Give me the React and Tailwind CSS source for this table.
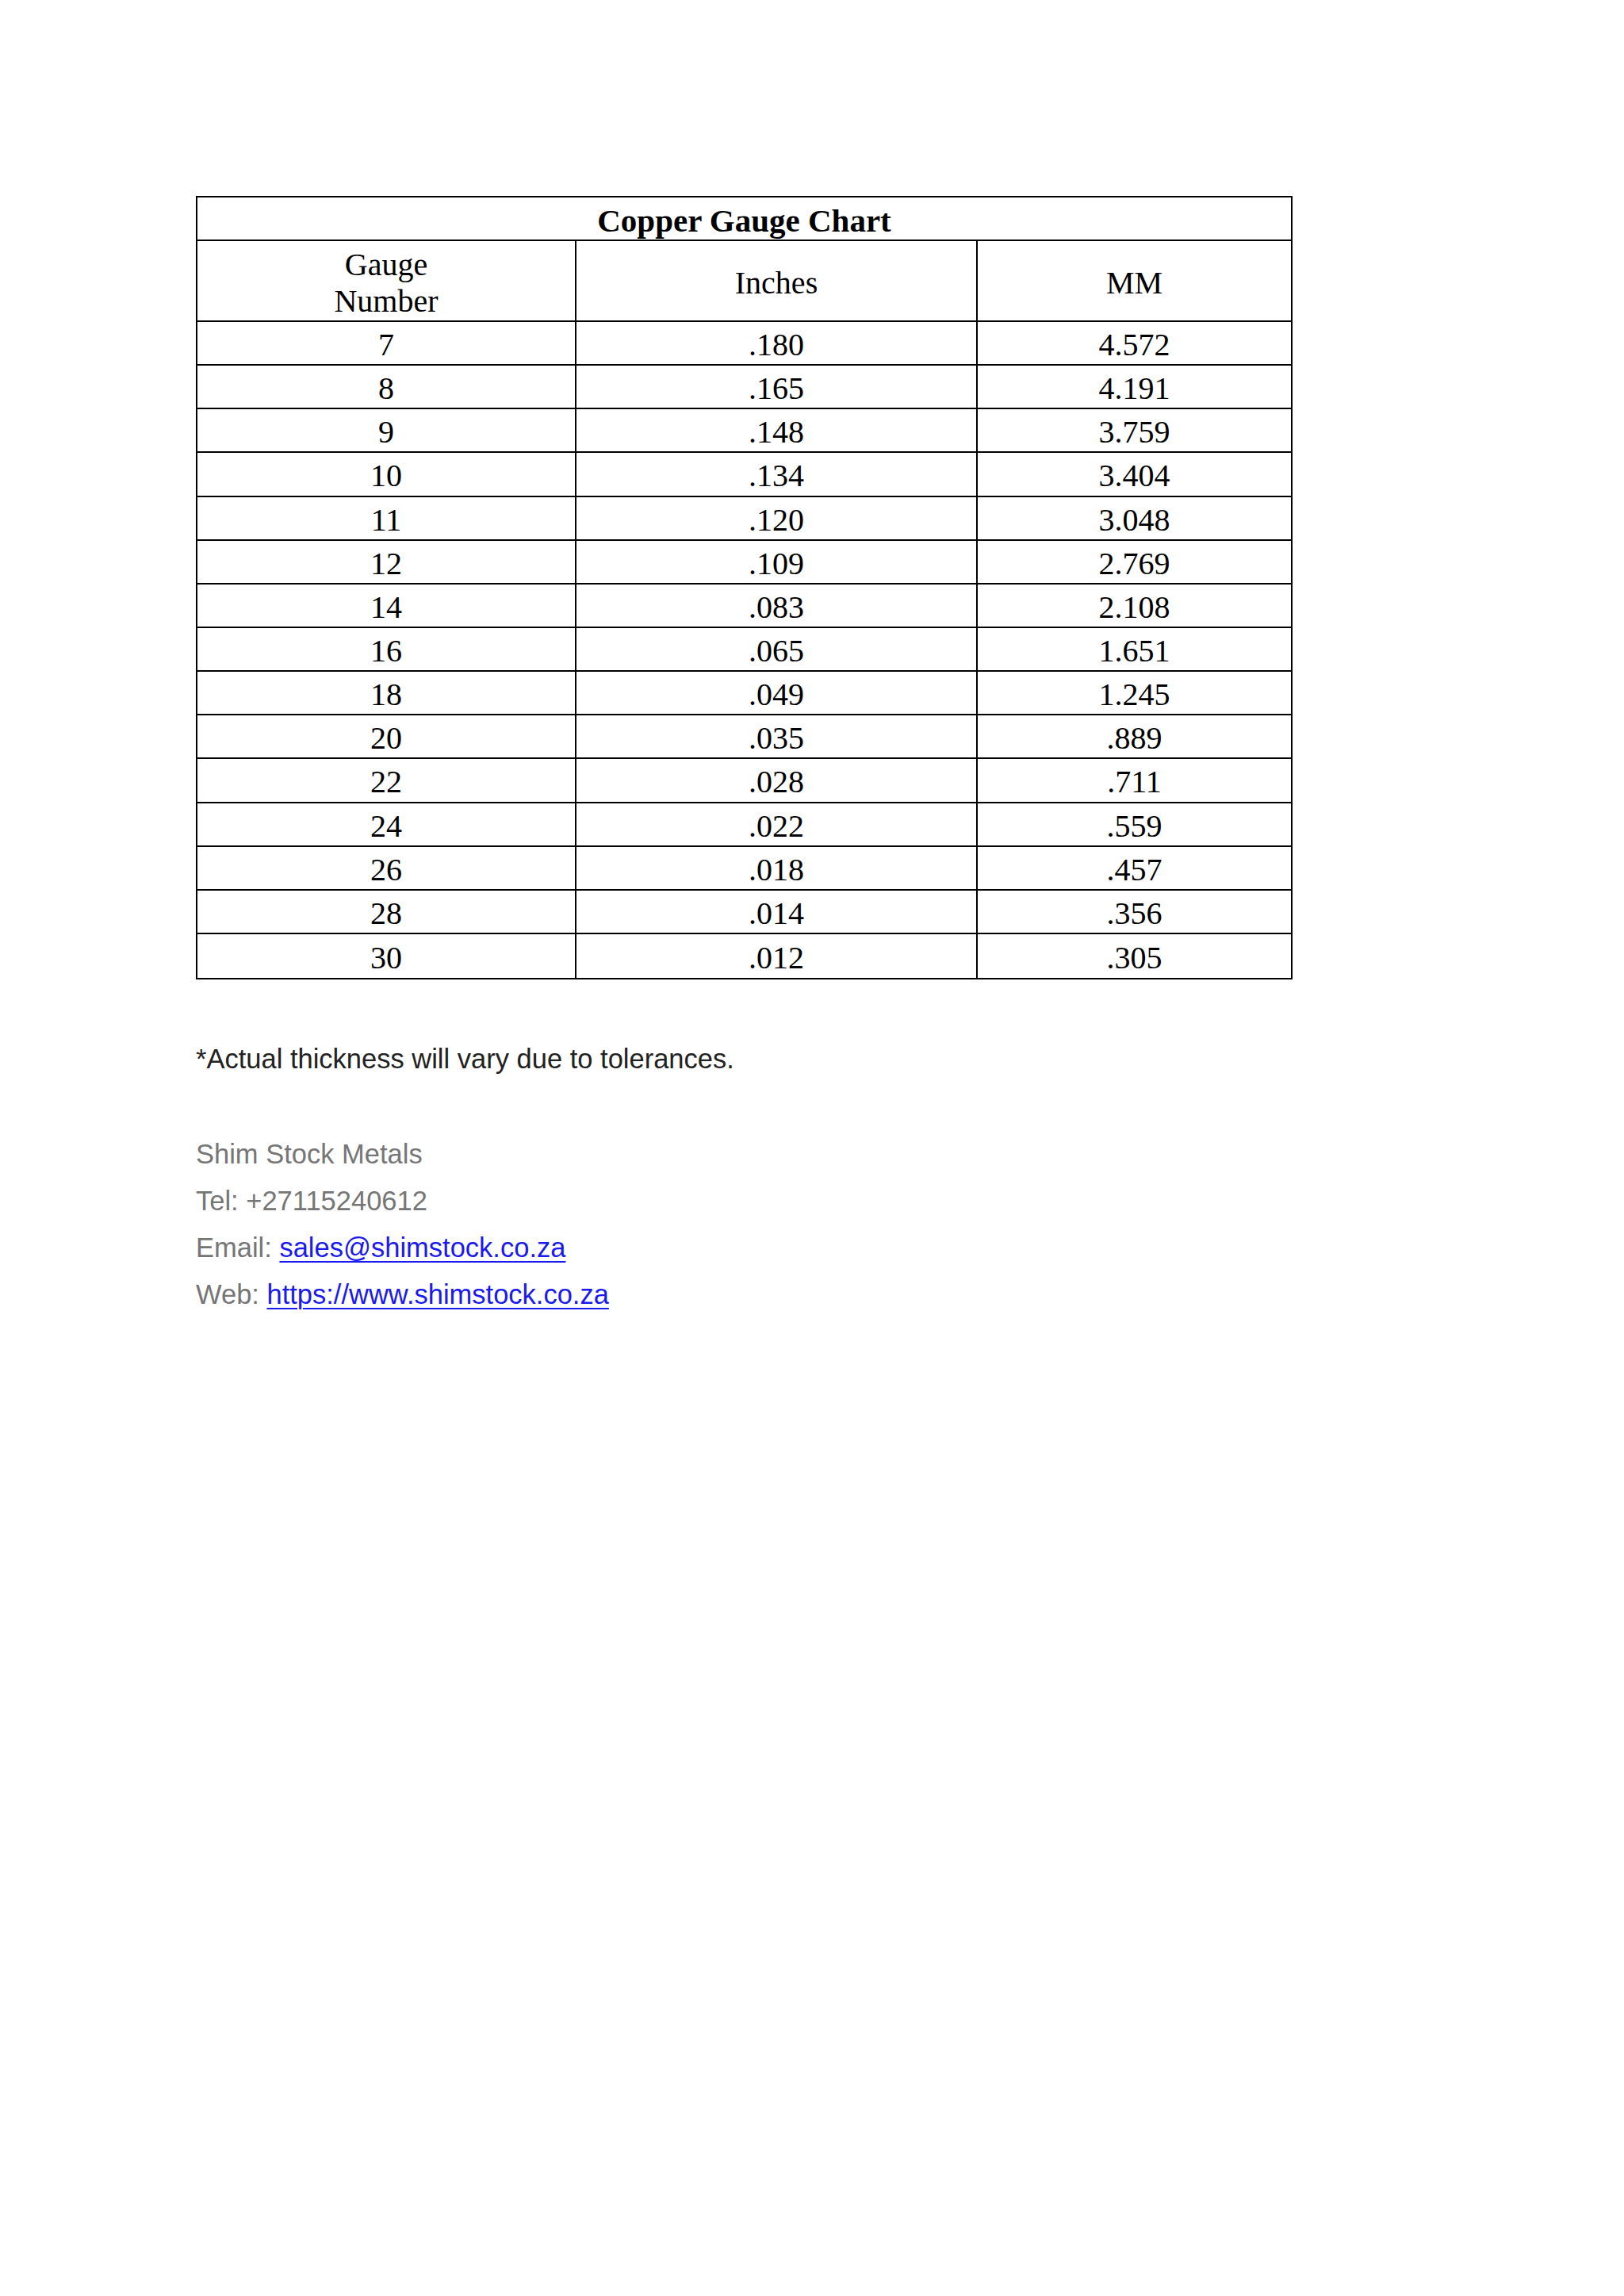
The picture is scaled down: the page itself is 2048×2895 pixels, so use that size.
import React from "react";

const rows = [
  ["7", ".180", "4.572"],
  ["8", ".165", "4.191"],
  ["9", ".148", "3.759"],
  ["10", ".134", "3.404"],
  ["11", ".120", "3.048"],
  ["12", ".109", "2.769"],
  ["14", ".083", "2.108"],
  ["16", ".065", "1.651"],
  ["18", ".049", "1.245"],
  ["20", ".035", ".889"],
  ["22", ".028", ".711"],
  ["24", ".022", ".559"],
  ["26", ".018", ".457"],
  ["28", ".014", ".356"],
  ["30", ".012", ".305"],
];

const GaugeTable = () => {
  return (
    <div className="w-[1383px] border-2 border-black [font-family:'Liberation_Serif','Times_New_Roman',serif] text-black text-[40px] leading-[46px]">
      <div className="h-[55px] border-b-2 border-black flex items-center justify-center pt-[5px] font-bold text-[41px]">
        Copper Gauge Chart
      </div>
      <div className="grid grid-cols-[478px_506px_395px] h-[102px] border-b-2 border-black">
        <div className="border-r-2 border-black flex items-center justify-center text-center pt-[5px]">
          Gauge
          <br />
          Number
        </div>
        <div className="border-r-2 border-black flex items-center justify-center pt-[5px]">Inches</div>
        <div className="flex items-center justify-center pt-[5px]">MM</div>
      </div>
      {rows.map((r, i) => (
        <div
          key={r[0]}
          className={`grid grid-cols-[478px_506px_395px] h-[55.15px] ${i < rows.length - 1 ? "border-b-2 border-black" : ""}`}
        >
          <div className="border-r-2 border-black flex items-center justify-center pt-[5px]">{r[0]}</div>
          <div className="border-r-2 border-black flex items-center justify-center pt-[5px]">{r[1]}</div>
          <div className="flex items-center justify-center pt-[5px]">{r[2]}</div>
        </div>
      ))}
    </div>
  );
};

const ContactLine = ({ label, link }) => {
  return (
    <div className="h-[59px] leading-[59px] whitespace-nowrap">
      {label}
      {link && (
        <span className="text-[#1a1aee] underline decoration-2 underline-offset-[5px]">{link}</span>
      )}
    </div>
  );
};

export default function App() {
  return (
    <div className="w-[2048px] h-[2895px] bg-white pl-[247px] pt-[247px]">
      <GaugeTable />
      <div className="[font-family:'Liberation_Sans',Arial,sans-serif] text-[34.5px]">
        <p className="mt-[71px] leading-[59px] text-[#222222]">
          *Actual thickness will vary due to tolerances.
        </p>
        <div className="mt-[61px] text-[#767676]">
          <ContactLine label="Shim Stock Metals" />
          <ContactLine label="Tel: +27115240612" />
          <ContactLine label="Email: " link="sales@shimstock.co.za" />
          <ContactLine label="Web: " link="https://www.shimstock.co.za" />
        </div>
      </div>
    </div>
  );
}
